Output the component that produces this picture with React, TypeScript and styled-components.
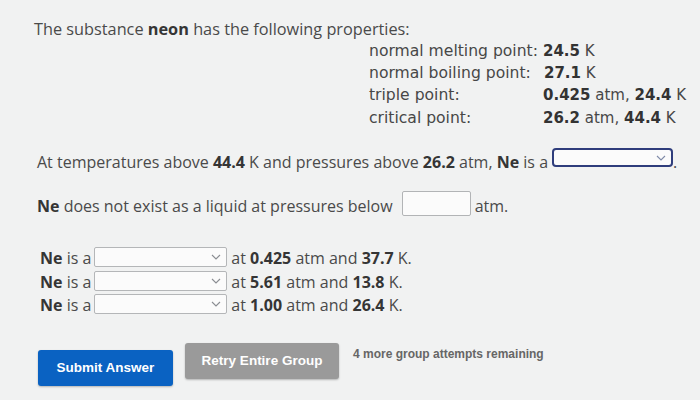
import React from "react";
import styled, { createGlobalStyle } from "styled-components";

const Global = createGlobalStyle`
  html, body { margin: 0; padding: 0; background: #f1f2f2; }
  body { width: 700px; height: 400px; overflow: hidden; }
`;

const Page = styled.div`
  width: 700px;
  height: 400px;
  box-sizing: border-box;
  padding: 20px 0 0 34px;
  font-family: "Open Sans", "Liberation Sans", sans-serif;
  font-size: 16px;
  color: #4a4a4a;
  background: #f1f2f2;
`;

const Title = styled.div`
  font-size: 16.3px;
  line-height: 19px;
  height: 19px;
`;

const B = styled.b`
  font-weight: 700;
  color: #353535;
`;

const PropsTable = styled.div`
  margin: 1px 0 0 335px;
  display: grid;
  grid-template-columns: 174px auto;
  grid-auto-rows: 22.2px;
  align-items: center;
  font-family: "DejaVu Sans", Verdana, sans-serif;
  font-size: 15px;
  color: #474747;
  white-space: nowrap;
`;

const PropLabel = styled.div`
  font-size: 15.6px;
`;

const PropValue = styled.div<{ $indent?: number }>`
  padding-left: ${(p) => p.$indent ?? 0}px;
  b { color: #333; }
`;

const Line = styled.div<{ $top: number; $left: number; $h?: number }>`
  display: flex;
  align-items: center;
  white-space: nowrap;
  margin-top: ${(p) => p.$top}px;
  margin-left: ${(p) => p.$left}px;
  height: ${(p) => p.$h ?? 24}px;
`;

const Gap = styled.span<{ $w: number }>`
  display: inline-block;
  width: ${(p) => p.$w}px;
`;

const SelectBox = styled.div<{ $w: number; $h: number; $active?: boolean; $dy?: number }>`
  position: relative;
  box-sizing: border-box;
  width: ${(p) => p.$w}px;
  height: ${(p) => p.$h}px;
  background: #fbfbfb;
  border: ${(p) => (p.$active ? "2px solid #2f3d7c" : "1px solid #b4b6b8")};
  border-radius: ${(p) => (p.$active ? 4 : 2)}px;
  transform: translateY(${(p) => p.$dy ?? 0}px);
  svg {
    position: absolute;
    right: 5px;
    top: 50%;
    margin-top: -3px;
  }
`;

const TextBox = styled.div`
  box-sizing: border-box;
  width: 69px;
  height: 25px;
  background: #fbfbfb;
  border: 1px solid #b2b4b6;
  border-radius: 2px;
  transform: translateY(-2px);
`;

const Rows = styled.div`
  margin-top: 29px;
  margin-left: 6px;
  display: flex;
  flex-direction: column;
`;

const Row = styled.div`
  display: flex;
  align-items: center;
  height: 23.3px;
  white-space: nowrap;
`;

const ButtonBar = styled.div`
  display: flex;
  align-items: flex-start;
  margin-top: 26px;
  margin-left: 4px;
  gap: 12px;
`;

const Button = styled.div<{ $bg: string; $w: number; $dy: number }>`
  box-sizing: border-box;
  width: ${(p) => p.$w}px;
  height: 36px;
  margin-top: ${(p) => p.$dy}px;
  border-radius: 3px;
  background: ${(p) => p.$bg};
  color: #fff;
  font-family: "Liberation Sans", Arial, sans-serif;
  font-weight: 700;
  font-size: 13.5px;
  display: flex;
  align-items: center;
  justify-content: center;
  box-shadow: 0 1px 2px rgba(0, 0, 0, 0.25);
`;

const Note = styled.div`
  margin-top: 4px;
  margin-left: 2px;
  font-family: "Liberation Sans", Arial, sans-serif;
  font-weight: 700;
  font-size: 12px;
  color: #666;
`;

const Chevron = ({ color }: { color: string }) => (
  <svg width="10" height="6" viewBox="0 0 10 6">
    <polyline points="1,1 5,5 9,1" fill="none" stroke={color} strokeWidth="1.1" />
  </svg>
);

const rows = [
  { p: "0.425", t: "37.7" },
  { p: "5.61", t: "13.8" },
  { p: "1.00", t: "26.4" },
];

export default function App() {
  return (
    <Page>
      <Global />
      <Title>
        The substance <B>neon</B> has the following properties:
      </Title>
      <PropsTable>
        <PropLabel>normal melting point:</PropLabel>
        <PropValue>
          <b>24.5</b> K
        </PropValue>
        <PropLabel>normal boiling point:</PropLabel>
        <PropValue $indent={1}>
          <b>27.1</b> K
        </PropValue>
        <PropLabel>triple point:</PropLabel>
        <PropValue>
          <b>0.425</b> atm, <b>24.4</b> K
        </PropValue>
        <PropLabel>critical point:</PropLabel>
        <PropValue>
          <b>26.2</b> atm, <b>44.4</b> K
        </PropValue>
      </PropsTable>
      <Line $top={21} $left={3}>
        At temperatures above&nbsp;<B>44.4</B>&nbsp;K and pressures above&nbsp;<B>26.2</B>&nbsp;atm,&nbsp;<B>Ne</B>&nbsp;is a
        <Gap $w={4} />
        <SelectBox $w={121} $h={19} $active $dy={-4}>
          <Chevron color="#7f8aa8" />
        </SelectBox>
        .
      </Line>
      <Line $top={20} $left={3}>
        <B>Ne</B>&nbsp;does not exist as a liquid at pressures below
        <Gap $w={9} />
        <TextBox />
        <Gap $w={4} />
        atm.
      </Line>
      <Rows>
        {rows.map((r) => (
          <Row key={r.p}>
            <B>Ne</B>&nbsp;is a
            <Gap $w={3} />
            <SelectBox $w={133} $h={20} $dy={-1}>
              <Chevron color="#8a8d92" />
            </SelectBox>
            <Gap $w={4} />
            at&nbsp;<B>{r.p}</B>&nbsp;atm and&nbsp;<B>{r.t}</B>&nbsp;K.
          </Row>
        ))}
      </Rows>
      <ButtonBar>
        <Button $bg="#0a62c2" $w={135} $dy={7}>
          Submit Answer
        </Button>
        <Button $bg="#9a9a9a" $w={154} $dy={0}>
          Retry Entire Group
        </Button>
        <Note>4 more group attempts remaining</Note>
      </ButtonBar>
    </Page>
  );
}
